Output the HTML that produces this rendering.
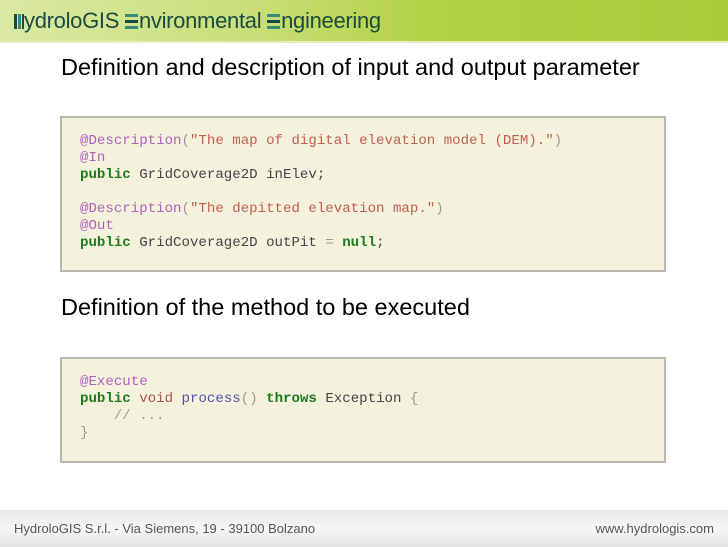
<!DOCTYPE html>
<html><head><meta charset="utf-8"><style>
*{margin:0;padding:0}
body{width:728px;height:547px;background:#fff;position:relative;overflow:hidden;font-family:"Liberation Sans",sans-serif}
.hdr{position:absolute;left:0;top:0;width:728px;height:41px;background:linear-gradient(90deg,#dbe9a4 0%,#c8df78 35%,#b2d143 60%,#a9cb3a 100%);border-bottom:2px solid #e4edbc}
.logo{position:absolute;left:14px;top:8px;font-size:22px;color:#1d4a40;letter-spacing:-0.3px;white-space:nowrap}
.e{display:inline-block;width:13px;height:15px;vertical-align:-1px;margin-right:1px;background:linear-gradient(#3a8a78 0 3px,transparent 3px 6px,#1d4a40 6px 9px,transparent 9px 12px,#3a8a78 12px 15px)}
.h{position:absolute;left:61px;font-size:23.5px;color:#000;white-space:nowrap}
.box{position:absolute;left:60px;width:606px;background:#f4f2dc;border:2px solid #b8b8b0;box-sizing:border-box}
pre{position:absolute;left:18px;font-family:"Liberation Mono",monospace;font-size:14.1px;line-height:17px;color:#444}
.a{color:#b060c0}.s{color:#c06050}.k{color:#1a7a1a;font-weight:bold}.v{color:#b05050}.f{color:#5050a8}.g{color:#999}
.ft{position:absolute;left:0;top:510px;width:728px;height:37px;background:linear-gradient(#e6e7e8,#f6f6f6 50%,#e2e3e4);font-size:13px;color:#555}
</style></head><body>
<div class="hdr"><div class="logo"><span style="display:inline-block;width:10px;height:15px;vertical-align:-1px;background:linear-gradient(90deg,#1d4a40 0 3px,transparent 3px 4px,#3a8a78 4px 7px,transparent 7px 8px,#1d4a40 8px 10px)"></span>ydroloGIS <span class="e"></span>nvironmental <span class="e"></span>ngineering</div></div>
<div class="h" style="top:54px">Definition and description of input and output parameter</div>
<div class="box" style="top:116px;height:156px"><pre style="top:15px"><span class="a">@Description</span><span class="g">(</span><span class="s">"The map of digital elevation model (DEM)."</span><span class="g">)</span>
<span class="a">@In</span>
<span class="k">public</span> GridCoverage2D inElev;

<span class="a">@Description</span><span class="g">(</span><span class="s">"The depitted elevation map."</span><span class="g">)</span>
<span class="a">@Out</span>
<span class="k">public</span> GridCoverage2D outPit <span class="g">=</span> <span class="k">null</span>;</pre></div>
<div class="h" style="top:294px">Definition of the method to be executed</div>
<div class="box" style="top:357px;height:106px"><pre style="top:15px"><span class="a">@Execute</span>
<span class="k">public</span> <span class="v">void</span> <span class="f">process</span><span class="g">()</span> <span class="k">throws</span> Exception <span class="g">{</span>
    <span class="g">// ...</span>
<span class="g">}</span></pre></div>
<div class="ft"><span style="position:absolute;left:14px;top:11px">HydroloGIS S.r.l. - Via Siemens, 19 - 39100 Bolzano</span><span style="position:absolute;right:14px;top:11px">www.hydrologis.com</span></div>
</body></html>
